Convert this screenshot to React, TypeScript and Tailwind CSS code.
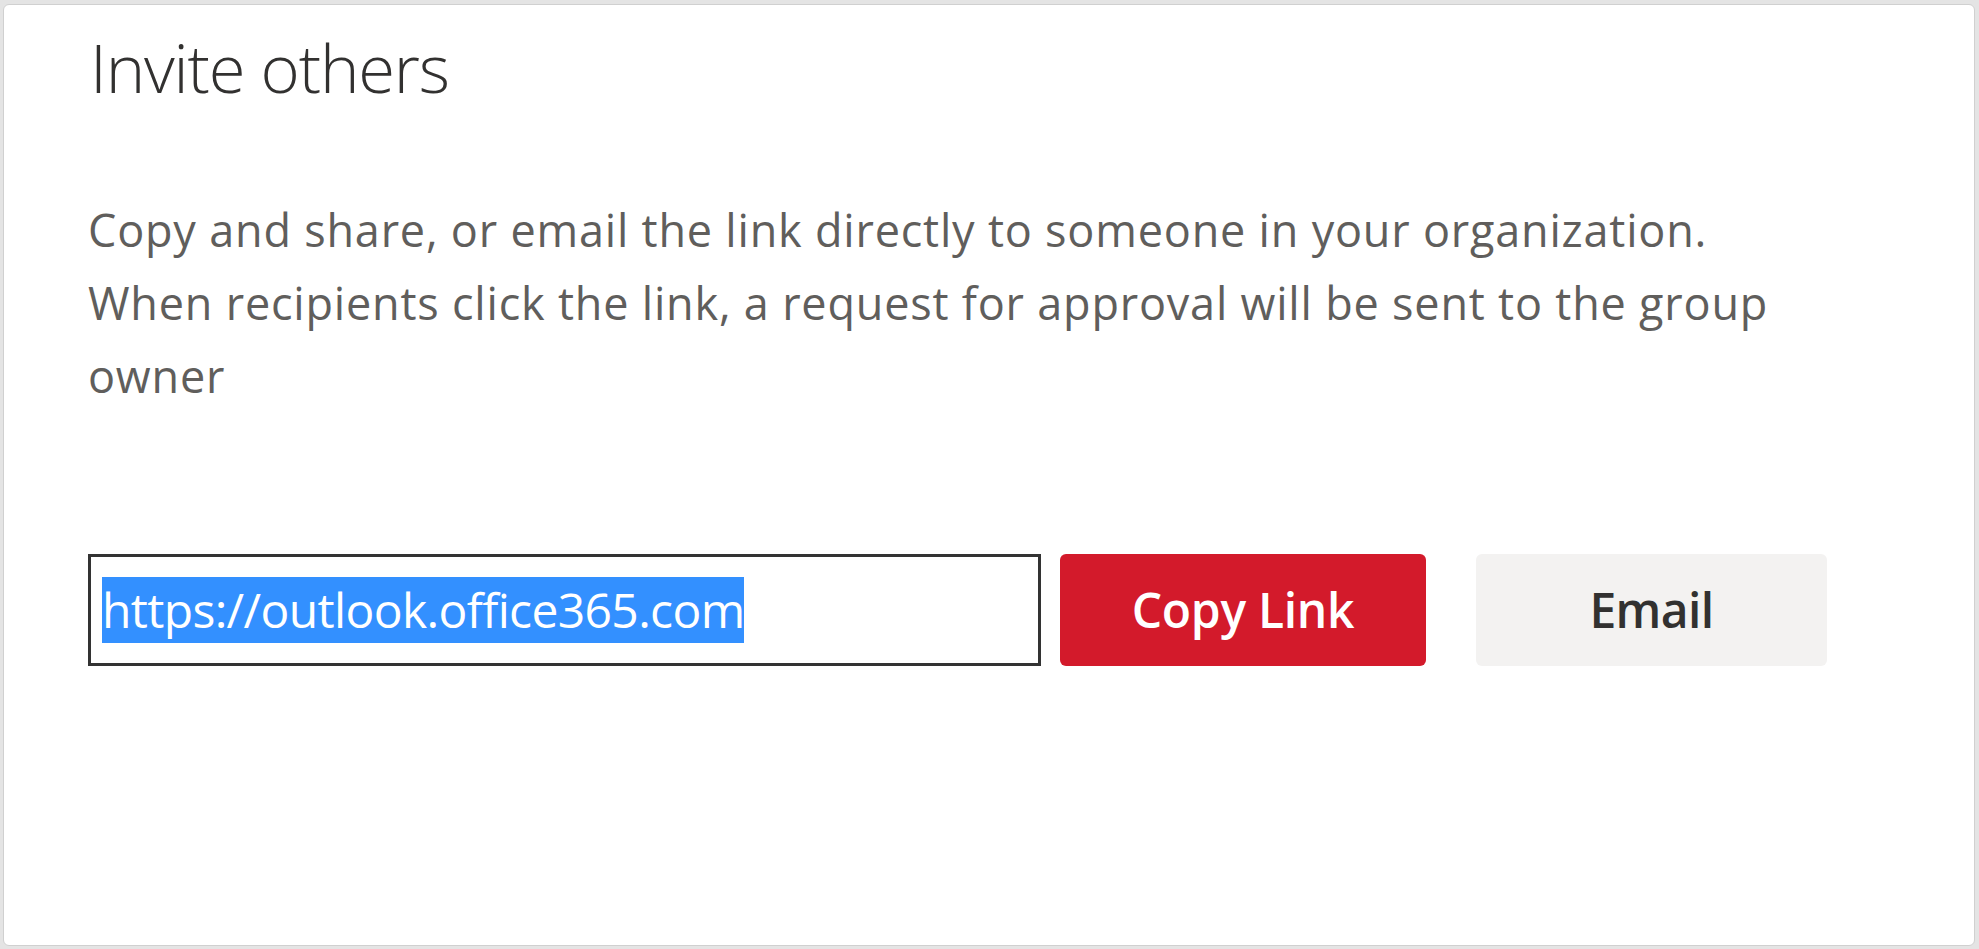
import React from "react";

export default function App() {
  return (
    <div className="w-[1979px] h-[949px] bg-[#e4e4e4] pt-[4px] pl-[3px] pr-[4px] pb-[3px] overflow-hidden" style={{ fontFamily: '"Open Sans", "Noto Sans", sans-serif' }}>
      <div className="w-full h-full bg-white rounded-[6px] border border-[#d0d0d0] pl-[84px] pt-[22px]">
        <h1 className="pl-[2px] text-[67px] leading-[80px] font-light text-[#323130] tracking-[-1.2px]">Invite others</h1>
        <div className="mt-[86px] text-[45px] leading-[73px] text-[#605e5c] tracking-[0.8px] w-[1800px]">
          <div className="whitespace-nowrap">Copy and share, or email the link directly to someone in your organization.</div>
          <div className="whitespace-nowrap">When recipients click the link, a request for approval will be sent to the group</div>
          <div>owner</div>
        </div>
        <div className="mt-[142px] flex items-start">
          <div className="w-[953px] h-[112px] border-[3px] border-[#333333] flex items-center pl-[11px]">
            <span className="inline-block bg-[#3390ff] text-white text-[48px] leading-[66px] tracking-[-0.65px] whitespace-nowrap">https://outlook.office365.com</span>
          </div>
          <button className="ml-[19px] w-[366px] h-[112px] rounded-[6px] bg-[#d31a2b] text-white text-[48px] font-semibold tracking-[-0.3px] flex items-center justify-center">Copy Link</button>
          <button className="ml-[50px] w-[351px] h-[112px] rounded-[6px] bg-[#f3f2f1] text-[#323130] text-[48px] font-semibold tracking-[-0.6px] flex items-center justify-center">Email</button>
        </div>
      </div>
    </div>
  );
}
